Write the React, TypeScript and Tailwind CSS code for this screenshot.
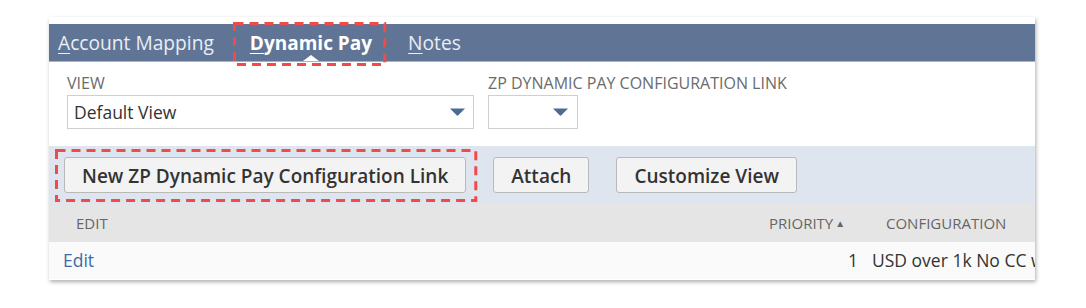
import React from "react";

function Caret() {
  return (
    <svg width="17" height="8" viewBox="0 0 17 8" className="shrink-0">
      <path d="M1 0.5 H16 L9.3 7.3 Q8.5 8 7.7 7.3 Z" fill="#4c6a92" />
    </svg>
  );
}

// red dashed annotation rectangle drawn over content
function DashBox({ className }: { className: string }) {
  return (
    <svg className={"absolute pointer-events-none overflow-visible " + className} width="100%" height="100%">
      <rect
        x="1.5"
        y="1.5"
        width="calc(100% - 3px)"
        height="calc(100% - 3px)"
        fill="none"
        stroke="#f14a4a"
        strokeWidth="3"
        strokeDasharray="9 6"
      />
    </svg>
  );
}

function Tab({ first, rest, active }: { first: string; rest: string; active?: boolean }) {
  return (
    <div className="relative h-full flex items-center pt-[2px]">
      <span
        className={
          active ? "text-white text-[19px] font-bold" : "text-[#e9eef5] text-[19.2px]"
        }
      >
        <u className="underline-offset-[3px] decoration-1">{first}</u>
        {rest}
      </span>
      {active && (
        <>
          {/* active tab notch */}
          <div className="absolute bottom-0 left-1/2 -translate-x-1/2 w-0 h-0 border-l-[8px] border-r-[8px] border-b-[6px] border-l-transparent border-r-transparent border-b-white" />
          <div className="absolute -left-[17px] -right-[14px] -top-[2px] -bottom-[5px]">
            <DashBox className="inset-0" />
          </div>
        </>
      )}
    </div>
  );
}

function Btn({ children }: { children: React.ReactNode }) {
  return (
    <button className="h-[36px] px-[17px] pt-[3px] bg-[#f3f3f3] border border-[#b9b9b9] rounded-[3px] text-[19px] font-semibold text-[#333] leading-none whitespace-nowrap">
      {children}
    </button>
  );
}

export default function App() {
  return (
    <div className="w-[1086px] h-[308px] bg-white pt-[17px] font-['Open_Sans',sans-serif]">
      <div className="ml-[49px] w-[986px] h-[263px] bg-white shadow-[1px_2px_4px_rgba(0,0,0,0.32)] overflow-hidden flex flex-col">
        {/* tabs */}
        <div className="mt-[7px] h-[38px] bg-[#607596] border-b border-[#a7b4c8] flex items-center pl-[9px] gap-[36px] shrink-0">
          <Tab first="A" rest="ccount Mapping" />
          <Tab first="D" rest="ynamic Pay" active />
          <Tab first="N" rest="otes" />
        </div>

        {/* filters */}
        <div className="flex gap-[14px] pl-[18px] pt-[11px] h-[84px] shrink-0">
          <div className="flex flex-col">
            <span className="text-[16px] text-[#6b6b6b] leading-[20px] h-[22px]">VIEW</span>
            <div className="w-[407px] h-[34px] border border-[#cfcfcf] flex items-center justify-between pl-[6px] pr-[7px]">
              <span className="text-[17.5px] text-[#333]">Default View</span>
              <Caret />
            </div>
          </div>
          <div className="flex flex-col">
            <span className="text-[16px] text-[#6b6b6b] leading-[20px] h-[22px] whitespace-nowrap">
              ZP DYNAMIC PAY CONFIGURATION LINK
            </span>
            <div className="w-[90px] h-[34px] border border-[#cfcfcf] flex items-center justify-end pr-[8px]">
              <Caret />
            </div>
          </div>
        </div>

        {/* button bar */}
        <div className="h-[58px] bg-[#dfe5ee] flex items-center pl-[6px] shrink-0">
          <div className="relative pl-[9px] pr-[11px] pt-[8px] pb-[9px]">
            <Btn>New ZP Dynamic Pay Configuration Link</Btn>
            <DashBox className="inset-0" />
          </div>
          <div className="ml-[16px]">
            <Btn>Attach</Btn>
          </div>
          <div className="ml-[27px]">
            <Btn>Customize View</Btn>
          </div>
        </div>

        {/* table header */}
        <div className="h-[38px] bg-[#e5e5e5] flex items-center text-[15px] text-[#666] shrink-0 whitespace-nowrap">
          <div className="w-[720px] shrink-0 pl-[27px]">EDIT</div>
          <div className="w-[103px] shrink-0 flex items-center">
            PRIORITY<span className="text-[10px] ml-[2px]">▲</span>
          </div>
          <div className="pl-[14px]">CONFIGURATION</div>
        </div>

        {/* row */}
        <div className="h-[37px] bg-[#fafafa] flex items-center text-[17.5px] text-[#333] whitespace-nowrap">
          <div className="w-[720px] shrink-0 pl-[14px]">
            <span className="text-[#3a6aac]">Edit</span>
          </div>
          <div className="w-[103px] shrink-0 text-right pr-[14px]">1</div>
          <div className="shrink-0">USD over 1k No CC with Card</div>
        </div>
      </div>
    </div>
  );
}
